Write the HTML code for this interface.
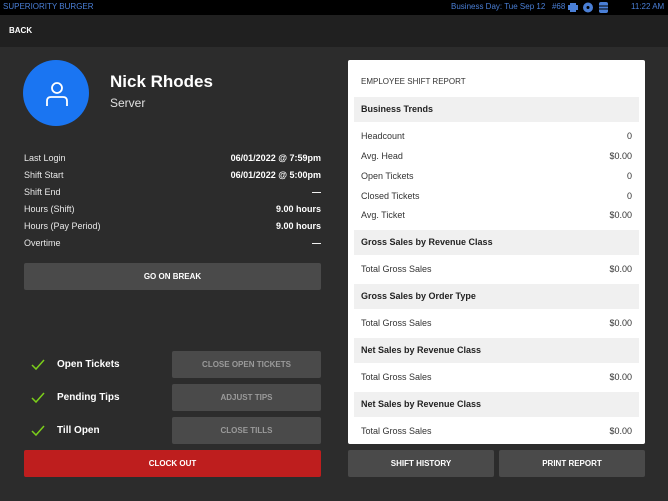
<!DOCTYPE html>
<html><head><meta charset="utf-8"><style>
*{margin:0;padding:0;box-sizing:border-box}
body{width:668px;height:501px;background:#2c2c2c;font-family:"Liberation Sans",sans-serif;position:relative;overflow:hidden;color:#fff}
.a{position:absolute}
.top{left:0;top:0;width:668px;height:15px;background:#000;font-size:8px;color:#4a7fd6;line-height:14px}
.nav{left:0;top:15px;width:668px;height:32px;background:#202020}
.btn{position:absolute;border-radius:2px;background:#4a4a4a;color:#fff;font-size:8px;font-weight:bold;text-align:center}
.dim{color:#9a9a9a}
.info{left:24px;width:297px;font-size:9px;color:#e8e8e8;height:17px;line-height:17px}
.info b{float:right;color:#fff}
.panel{left:348px;top:60px;width:297px;height:384px;background:#fff;border-radius:2px;color:#222}
.h{position:absolute;left:6px;width:285px;height:25px;background:#f0f0f0;font-size:9px;font-weight:bold;line-height:25px;padding-left:7px}
.r{position:absolute;left:13px;width:271px;font-size:9px;color:#333}
.r span{float:right}
.chk{font-size:10px;color:#fff;font-weight:bold;left:57px}
.ck{position:absolute;left:31px}
</style></head><body>
<div class="a top"><span style="position:absolute;left:3px">SUPERIORITY BURGER</span>
<span style="position:absolute;left:451px">Business Day: Tue Sep 12 &nbsp; #68</span>
<svg class="a" style="left:567px;top:2px" width="46" height="11"><rect x="1" y="3" width="10" height="5" fill="#4a7fd6"/><rect x="3" y="1" width="6" height="3" fill="#4a7fd6"/><rect x="3" y="7" width="6" height="3" fill="#4a7fd6"/><circle cx="21" cy="5.5" r="5" fill="#4a7fd6"/><circle cx="21" cy="5.5" r="1.5" fill="#000"/><rect x="32" y="0" width="9" height="11" rx="2" fill="#4a7fd6"/><line x1="32" y1="4" x2="41" y2="4" stroke="#000"/><line x1="32" y1="7" x2="41" y2="7" stroke="#000"/></svg>
<span style="position:absolute;left:631px">11:22 AM</span></div>
<div class="a nav"><span style="position:absolute;left:9px;top:11px;font-size:8px;font-weight:bold">BACK</span></div>
<div class="a" style="left:23px;top:60px;width:66px;height:66px;border-radius:50%;background:#1a75f2"></div>
<svg class="a" style="left:44px;top:81px" width="26" height="26"><circle cx="13" cy="7" r="5" fill="none" stroke="#fff" stroke-width="1.8"/><path d="M3 25 V20 Q3 16 7 16 H19 Q23 16 23 20 V25" fill="none" stroke="#fff" stroke-width="1.8"/></svg>
<div class="a" style="left:110px;top:72px;font-size:17px;font-weight:bold">Nick Rhodes</div>
<div class="a" style="left:110px;top:96px;font-size:12px;color:#e0e0e0">Server</div>
<div class="a info" style="top:150px">Last Login<b>06/01/2022 @ 7:59pm</b></div>
<div class="a info" style="top:167px">Shift Start<b>06/01/2022 @ 5:00pm</b></div>
<div class="a info" style="top:184px">Shift End<b>—</b></div>
<div class="a info" style="top:201px">Hours (Shift)<b>9.00 hours</b></div>
<div class="a info" style="top:218px">Hours (Pay Period)<b>9.00 hours</b></div>
<div class="a info" style="top:235px">Overtime<b>—</b></div>
<div class="btn" style="left:24px;top:263px;width:297px;height:27px;line-height:27px">GO ON BREAK</div>
<svg class="ck" style="top:359px" width="14" height="12"><path d="M1 6 L5 10 L13 1" fill="none" stroke="#7ccf1a" stroke-width="1.5"/></svg>
<svg class="ck" style="top:392px" width="14" height="12"><path d="M1 6 L5 10 L13 1" fill="none" stroke="#7ccf1a" stroke-width="1.5"/></svg>
<svg class="ck" style="top:425px" width="14" height="12"><path d="M1 6 L5 10 L13 1" fill="none" stroke="#7ccf1a" stroke-width="1.5"/></svg>
<div class="a chk" style="top:359px">Open Tickets</div>
<div class="a chk" style="top:392px">Pending Tips</div>
<div class="a chk" style="top:425px">Till Open</div>
<div class="btn dim" style="left:172px;top:351px;width:149px;height:27px;line-height:27px">CLOSE OPEN TICKETS</div>
<div class="btn dim" style="left:172px;top:384px;width:149px;height:27px;line-height:27px">ADJUST TIPS</div>
<div class="btn dim" style="left:172px;top:417px;width:149px;height:27px;line-height:27px">CLOSE TILLS</div>
<div class="btn" style="left:24px;top:450px;width:297px;height:27px;line-height:27px;background:#be1e1e">CLOCK OUT</div>
<div class="a panel">
<div class="a" style="left:13px;top:17px;font-size:8px;color:#333">EMPLOYEE SHIFT REPORT</div>
<div class="h" style="top:37px">Business Trends</div>
<div class="r" style="top:71px">Headcount<span>0</span></div>
<div class="r" style="top:91px">Avg. Head<span>$0.00</span></div>
<div class="r" style="top:111px">Open Tickets<span>0</span></div>
<div class="r" style="top:131px">Closed Tickets<span>0</span></div>
<div class="r" style="top:150px">Avg. Ticket<span>$0.00</span></div>
<div class="h" style="top:170px">Gross Sales by Revenue Class</div>
<div class="r" style="top:204px">Total Gross Sales<span>$0.00</span></div>
<div class="h" style="top:224px">Gross Sales by Order Type</div>
<div class="r" style="top:258px">Total Gross Sales<span>$0.00</span></div>
<div class="h" style="top:278px">Net Sales by Revenue Class</div>
<div class="r" style="top:312px">Total Gross Sales<span>$0.00</span></div>
<div class="h" style="top:332px">Net Sales by Revenue Class</div>
<div class="r" style="top:366px">Total Gross Sales<span>$0.00</span></div>
</div>
<div class="btn" style="left:348px;top:450px;width:146px;height:27px;line-height:27px">SHIFT HISTORY</div>
<div class="btn" style="left:499px;top:450px;width:146px;height:27px;line-height:27px">PRINT REPORT</div>
</body></html>
